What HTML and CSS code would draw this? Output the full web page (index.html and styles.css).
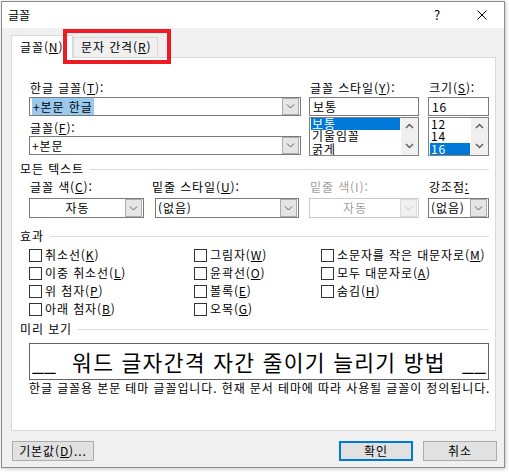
FILE: index.html
```html
<!DOCTYPE html>
<html lang="ko">
<head>
<meta charset="utf-8">
<title>글꼴</title>
<link rel="stylesheet" href="styles.css">
</head>
<body>
<div class="window">
  <div class="titlebar">
    <span class="title">글꼴</span>
    <span class="help">?</span>
    <svg class="close" width="10" height="10" viewBox="0 0 10 10"><path d="M0.5 0.5 L9.5 9.5 M9.5 0.5 L0.5 9.5" stroke="#000" stroke-width="1" fill="none"/></svg>
  </div>
  <div class="content">
    <div class="tabs">
      <div class="tab active">글꼴(<u>N</u>)</div>
      <div class="tab">문자 간격(<u>R</u>)</div>
    </div>
    <div class="panel">
      <div class="font-row">
        <div class="col c1">
          <div class="lbl">한글 글꼴(<u>T</u>):</div>
          <div class="combo"><span class="val"><span class="sel">+본문 한글</span></span><span class="dd"><svg width="9" height="5" viewBox="0 0 9 5"><path d="M1 0.5 L4.5 4 L8 0.5" fill="none" stroke="#606060"/></svg></span></div>
          <div class="lbl l2">글꼴(<u>F</u>):</div>
          <div class="combo"><span class="val">+본문</span><span class="dd"><svg width="9" height="5" viewBox="0 0 9 5"><path d="M1 0.5 L4.5 4 L8 0.5" fill="none" stroke="#606060"/></svg></span></div>
        </div>
        <div class="col c2">
          <div class="lbl">글꼴 스타일(<u>Y</u>):</div>
          <div class="input">보통</div>
          <div class="list">
            <div class="items">
              <div class="item on">보통</div>
              <div class="item">기울임꼴</div>
              <div class="item">굵게</div>
            </div>
            <div class="scroll">
              <svg width="9" height="6" viewBox="0 0 9 6"><path d="M1 5 L4.5 1.5 L8 5" fill="none" stroke="#606060" stroke-width="1.5"/></svg>
              <svg width="9" height="6" viewBox="0 0 9 6"><path d="M1 1 L4.5 4.5 L8 1" fill="none" stroke="#606060" stroke-width="1.5"/></svg>
            </div>
          </div>
        </div>
        <div class="col c3">
          <div class="lbl">크기(<u>S</u>):</div>
          <div class="input">16</div>
          <div class="list">
            <div class="items">
              <div class="item">12</div>
              <div class="item">14</div>
              <div class="item on">16</div>
            </div>
            <div class="scroll">
              <svg width="9" height="6" viewBox="0 0 9 6"><path d="M1 5 L4.5 1.5 L8 5" fill="none" stroke="#606060" stroke-width="1.5"/></svg>
              <svg width="9" height="6" viewBox="0 0 9 6"><path d="M1 1 L4.5 4.5 L8 1" fill="none" stroke="#606060" stroke-width="1.5"/></svg>
            </div>
          </div>
        </div>
      </div>

      <div class="gt gt1"><span>모든 텍스트</span><i></i></div>
      <div class="text-row">
        <div class="tcol t1">
          <div class="lbl2">글꼴 색(<u>C</u>):</div>
          <div class="combo tall"><span class="val center">자동</span><span class="dd"><svg width="9" height="5" viewBox="0 0 9 5"><path d="M1 0.5 L4.5 4 L8 0.5" fill="none" stroke="#606060"/></svg></span></div>
        </div>
        <div class="tcol t2">
          <div class="lbl2 shift">밑줄 스타일(<u>U</u>):</div>
          <div class="combo tall"><span class="val">(없음)</span><span class="dd"><svg width="9" height="5" viewBox="0 0 9 5"><path d="M1 0.5 L4.5 4 L8 0.5" fill="none" stroke="#606060"/></svg></span></div>
        </div>
        <div class="tcol t3">
          <div class="lbl2 disabled">밑줄 색(I):</div>
          <div class="combo tall off"><span class="val center">자동</span><span class="dd"><svg width="9" height="5" viewBox="0 0 9 5"><path d="M1 0.5 L4.5 4 L8 0.5" fill="none" stroke="#c4c4c4"/></svg></span></div>
        </div>
        <div class="tcol t4">
          <div class="lbl2">강조점<u>:</u></div>
          <div class="combo tall"><span class="val">(없음)</span><span class="dd"><svg width="9" height="5" viewBox="0 0 9 5"><path d="M1 0.5 L4.5 4 L8 0.5" fill="none" stroke="#606060"/></svg></span></div>
        </div>
      </div>

      <div class="gt gt2"><span>효과</span><i></i></div>
      <div class="effects">
        <div class="cb"><span class="box"></span>취소선(<u>K</u>)</div>
        <div class="cb"><span class="box"></span>이중 취소선(<u>L</u>)</div>
        <div class="cb"><span class="box"></span>위 첨자(<u>P</u>)</div>
        <div class="cb"><span class="box"></span>아래 첨자(<u>B</u>)</div>
        <div class="cb"><span class="box"></span>그림자(<u>W</u>)</div>
        <div class="cb"><span class="box"></span>윤곽선(<u>O</u>)</div>
        <div class="cb"><span class="box"></span>볼록(<u>E</u>)</div>
        <div class="cb"><span class="box"></span>오목(<u>G</u>)</div>
        <div class="cb"><span class="box"></span>소문자를 작은 대문자로(<u>M</u>)</div>
        <div class="cb"><span class="box"></span>모두 대문자로(<u>A</u>)</div>
        <div class="cb"><span class="box"></span>숨김(<u>H</u>)</div>
      </div>

      <div class="gt gt3"><span>미리 보기</span><i></i></div>
      <div class="preview">
        <span class="us">__</span>
        <span class="ptext">워드 글자간격 자간 줄이기 늘리기 방법</span>
        <span class="us">__</span>
      </div>
      <div class="desc">한글 글꼴용 본문 테마 글꼴입니다. 현재 문서 테마에 따라 사용될 글꼴이 정의됩니다.</div>
    </div>

    <div class="buttons">
      <div class="btn b-def">기본값(<u>D</u>)...</div>
      <div class="spacer"></div>
      <div class="btn b-ok">확인</div>
      <div class="btn b-cancel">취소</div>
    </div>
  </div>
</div>
<div class="annot"></div>
</body>
</html>
```

FILE: styles.css
```css
* { box-sizing: border-box; }

body {
  margin: 0;
  width: 509px;
  height: 472px;
  overflow: hidden;
  position: relative;
  background: #ffffff;
  font-family: "Noto Sans CJK KR", "Noto Sans", sans-serif;
  font-size: 12px;
  line-height: 16px;
  letter-spacing: 0.9px;
  color: #000;
}

u { text-decoration: underline; text-underline-offset: 1px; }

.window {
  margin: 1px 0 0 1px;
  width: 504px;
  height: 467px;
  border: 1px solid #8a8a8a;
  background: #f0f0f0;
  box-shadow: 1px 1px 4px rgba(0, 0, 0, 0.22);
  display: flex;
  flex-direction: column;
}

.titlebar {
  height: 26px;
  flex: none;
  background: #fff;
  display: flex;
  align-items: center;
  padding: 0 17px 0 6px;
  letter-spacing: 0;
}
.title { flex: 1; }
.help { width: 8px; font-size: 13px; margin-right: 35px; }
.close { display: block; }

.content {
  flex: 1;
  padding: 7px 8px 0 9px;
  display: flex;
  flex-direction: column;
}

.tabs {
  display: flex;
  height: 22px;
  align-items: flex-end;
}
.tab {
  width: 85px;
  height: 20px;
  border: 1px solid #d9d9d9;
  border-bottom: none;
  background: #f0f0f0;
  padding: 1px 0 0 7px;
  line-height: 16px;
  white-space: nowrap;
}
.tab.active {
  width: 62px;
  height: 23px;
  margin-bottom: -1px;
  background: #fff;
  padding: 3px 0 0 8px;
  position: relative;
  z-index: 1;
}

.panel {
  width: 485px;
  height: 374px;
  flex: none;
  background: #fff;
  border: 1px solid #d9d9d9;
  padding: 21px 0 0 17px;
}

.font-row { display: flex; }
.col { display: flex; flex-direction: column; }
.c1 { width: 272px; }
.c2 { width: 110px; margin-left: 8px; }
.c3 { width: 61px; margin-left: 9px; }

.lbl {
  height: 18px;
  line-height: 17px;
  padding-left: 1px;
  white-space: nowrap;
}
.lbl.l2 { height: 20px; padding-top: 4px; line-height: 16px; }

.combo {
  height: 19px;
  border: 1px solid #7a7a7a;
  background: #fff;
  display: flex;
}
.combo.tall { height: 20px; }
.combo .val {
  flex: 1;
  padding: 0 2px;
  line-height: 17px;
  white-space: nowrap;
  overflow: hidden;
}
.combo .val.center { text-align: center; }
.combo .sel { background: #99c9ef; padding: 0 1px; }
.combo .dd {
  width: 17px;
  margin-right: 1px;
  background: #e5e5e5;
  border: 1px solid #acacac;
  display: flex;
  align-items: center;
  justify-content: center;
}
.combo.off { border-color: #cccccc; }
.combo.off .val { color: #a0a0a0; }
.combo.off .dd { background: #f0f0f0; border-color: #dcdcdc; }

.input {
  height: 19px;
  border: 1px solid #7a7a7a;
  padding-left: 3px;
  line-height: 17px;
}
.list {
  margin-top: 1px;
  height: 39px;
  border: 1px solid #828282;
  display: flex;
  overflow: hidden;
}
.items { flex: 1; padding: 0 1px; overflow: hidden; }
.item { height: 12.4px; line-height: 12px; padding-left: 1px; white-space: nowrap; }
.item.on { background: #0078d7; color: #fff; }
.scroll {
  width: 17px;
  background: #f0f0f0;
  display: flex;
  flex-direction: column;
  align-items: center;
  justify-content: space-between;
  padding: 5px 0 6px;
}
.scroll svg { display: block; }

.gt {
  width: 469px;
  margin-left: -9px;
  height: 16px;
  display: flex;
  align-items: center;
  white-space: nowrap;
}
.gt i { flex: 1; height: 1px; background: #dcdcdc; margin-left: 6px; }
.gt1 { margin-top: 5px; }
.gt2 { margin-top: 10px; }
.gt3 { margin-top: 3px; }

.text-row { display: flex; margin-top: 1px; }
.tcol { display: flex; flex-direction: column; }
.t1 { width: 115px; }
.t2 { width: 144px; margin-left: 11px; }
.t3 { width: 110px; margin-left: 10px; }
.t4 { width: 61px; margin-left: 9px; }
.lbl2 { height: 20px; line-height: 18px; padding-left: 1px; white-space: nowrap; }
.lbl2.shift { margin-left: -4px; }
.lbl2.disabled { color: #a0a0a0; }

.effects {
  margin-top: 2px;
  display: grid;
  grid-template-columns: 165px 127px 180px;
  grid-template-rows: repeat(4, 18px);
  grid-auto-flow: column;
}
.cb { display: flex; align-items: center; white-space: nowrap; }
.box {
  width: 13px;
  height: 13px;
  border: 1px solid #333;
  background: #fff;
  margin-right: 3px;
  flex: none;
}

.preview {
  margin-top: 6px;
  width: 460px;
  height: 37px;
  border: 1px solid #646464;
  display: flex;
  justify-content: space-between;
  align-items: center;
  padding: 0 2px;
  font-size: 21.5px;
  line-height: 30px;
  letter-spacing: 0;
}
.preview .ptext { letter-spacing: 1.3px; }
.desc { height: 16px; line-height: 16px; white-space: nowrap; }

.buttons { display: flex; margin-top: 10px; }
.spacer { flex: 1; }
.btn {
  height: 20px;
  background: #e1e1e1;
  border: 1px solid #adadad;
  text-align: center;
  line-height: 18px;
  white-space: nowrap;
}
.b-def { width: 82px; margin-left: 1px; }
.b-ok { width: 74px; border: 2px solid #0078d7; line-height: 16px; }
.b-cancel { width: 74px; margin-left: 10px; margin-right: -1px; }

.annot {
  position: absolute;
  left: 63px;
  top: 29px;
  width: 108px;
  height: 35px;
  border: 4px solid #ed1c24;
  z-index: 5;
}
```
